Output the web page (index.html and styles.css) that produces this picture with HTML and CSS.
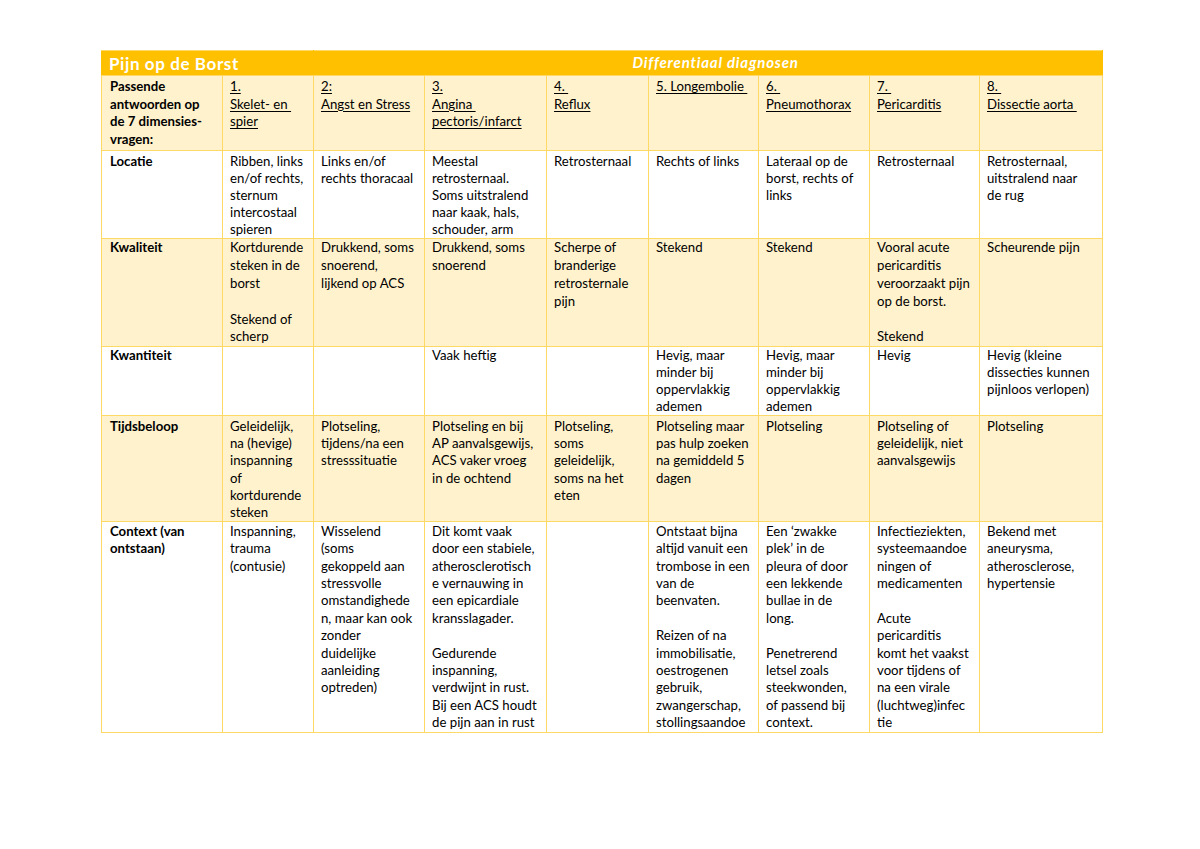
FILE: index.html
```html
<!DOCTYPE html>
<html lang="nl">
<head>
<meta charset="utf-8">
<title>Pijn op de Borst</title>
<link rel="stylesheet" href="styles.css">
</head>
<body>
<div class="page">
<table class="dd">
  <colgroup>
    <col class="c1"><col class="c2"><col class="c3"><col class="c4"><col class="c5"><col class="c6"><col class="c7"><col class="c8"><col class="c9">
  </colgroup>
  <tr class="r-title">
    <td colspan="2" class="t-main">Pijn op de Borst</td>
    <td colspan="7" class="t-sub">Differentiaal diagnosen</td>
  </tr>
  <tr class="r-head shade">
    <td class="lbl">Passende<br>antwoorden op<br>de 7 dimensies-<br>vragen:</td>
    <td><u>1.</u><br><u>Skelet- en&nbsp;</u><br><u>spier</u></td>
    <td><u>2:</u><br><u>Angst en Stress</u></td>
    <td><u>3.</u><br><u>Angina&nbsp;</u><br><u>pectoris/infarct</u></td>
    <td><u>4.&nbsp;</u><br><u>Reflux</u></td>
    <td><u>5. Longembolie&nbsp;</u></td>
    <td><u>6.&nbsp;</u><br><u>Pneumothorax</u></td>
    <td><u>7.&nbsp;</u><br><u>Pericarditis</u></td>
    <td><u>8.&nbsp;</u><br><u>Dissectie aorta&nbsp;</u></td>
  </tr>
  <tr class="r-loc">
    <td class="lbl">Locatie</td>
    <td>Ribben, links<br>en/of rechts,<br>sternum<br>intercostaal<br>spieren</td>
    <td>Links en/of<br>rechts thoracaal</td>
    <td>Meestal<br>retrosternaal.<br>Soms uitstralend<br>naar kaak, hals,<br>schouder, arm</td>
    <td>Retrosternaal</td>
    <td>Rechts of links</td>
    <td>Lateraal op de<br>borst, rechts of<br>links</td>
    <td>Retrosternaal</td>
    <td>Retrosternaal,<br>uitstralend naar<br>de rug</td>
  </tr>
  <tr class="r-kwal shade">
    <td class="lbl">Kwaliteit</td>
    <td>Kortdurende<br>steken in de<br>borst<br><br>Stekend of<br>scherp</td>
    <td>Drukkend, soms<br>snoerend,<br>lijkend op ACS</td>
    <td>Drukkend, soms<br>snoerend</td>
    <td>Scherpe of<br>branderige<br>retrosternale<br>pijn</td>
    <td>Stekend</td>
    <td>Stekend</td>
    <td>Vooral acute<br>pericarditis<br>veroorzaakt pijn<br>op de borst.<br><br>Stekend</td>
    <td>Scheurende pijn</td>
  </tr>
  <tr class="r-kwant">
    <td class="lbl">Kwantiteit</td>
    <td></td>
    <td></td>
    <td>Vaak heftig</td>
    <td></td>
    <td>Hevig, maar<br>minder bij<br>oppervlakkig<br>ademen</td>
    <td>Hevig, maar<br>minder bij<br>oppervlakkig<br>ademen</td>
    <td>Hevig</td>
    <td>Hevig (kleine<br>dissecties kunnen<br>pijnloos verlopen)</td>
  </tr>
  <tr class="r-tijd shade">
    <td class="lbl">Tijdsbeloop</td>
    <td>Geleidelijk,<br>na (hevige)<br>inspanning<br>of<br>kortdurende<br>steken</td>
    <td>Plotseling,<br>tijdens/na een<br>stresssituatie</td>
    <td>Plotseling en bij<br>AP aanvalsgewijs,<br>ACS vaker vroeg<br>in de ochtend</td>
    <td>Plotseling,<br>soms<br>geleidelijk,<br>soms na het<br>eten</td>
    <td>Plotseling maar<br>pas hulp zoeken<br>na gemiddeld 5<br>dagen</td>
    <td>Plotseling</td>
    <td>Plotseling of<br>geleidelijk, niet<br>aanvalsgewijs</td>
    <td>Plotseling</td>
  </tr>
  <tr class="r-ctx">
    <td class="lbl">Context (van<br>ontstaan)</td>
    <td>Inspanning,<br>trauma<br>(contusie)</td>
    <td>Wisselend<br>(soms<br>gekoppeld aan<br>stressvolle<br>omstandighede<br>n, maar kan ook<br>zonder<br>duidelijke<br>aanleiding<br>optreden)</td>
    <td>Dit komt vaak<br>door een stabiele,<br>atherosclerotisch<br>e vernauwing in<br>een epicardiale<br>kransslagader.<br><br>Gedurende<br>inspanning,<br>verdwijnt in rust.<br>Bij een ACS houdt<br>de pijn aan in rust</td>
    <td></td>
    <td>Ontstaat bijna<br>altijd vanuit een<br>trombose in een<br>van de<br>beenvaten.<br><br>Reizen of na<br>immobilisatie,<br>oestrogenen<br>gebruik,<br>zwangerschap,<br>stollingsaandoe</td>
    <td>Een ‘zwakke<br>plek’ in de<br>pleura of door<br>een lekkende<br>bullae in de<br>long.<br><br>Penetrerend<br>letsel zoals<br>steekwonden,<br>of passend bij<br>context.</td>
    <td>Infectieziekten,<br>systeemaandoe<br>ningen of<br>medicamenten<br><br>Acute<br>pericarditis<br>komt het vaakst<br>voor tijdens of<br>na een virale<br>(luchtweg)infec<br>tie</td>
    <td>Bekend met<br>aneurysma,<br>atherosclerose,<br>hypertensie</td>
  </tr>
</table>
</div>
</body>
</html>
```

FILE: styles.css
```css
html, body {
  margin: 0;
  padding: 0;
  background: #ffffff;
}

.page {
  padding: 50px 0 0 101px;
  font-family: Lato, "Open Sans", sans-serif;
  color: #000000;
}

.dd {
  border-collapse: collapse;
  table-layout: fixed;
  width: 1001px;
  font-size: 13.2px;
  line-height: 17.4px;
}

.c1 { width: 121px; }
.c2 { width: 91px; }
.c3 { width: 111px; }
.c4 { width: 122px; }
.c5 { width: 102px; }
.c6 { width: 110px; }
.c7 { width: 111px; }
.c8 { width: 110px; }
.c9 { width: 123px; }

.dd td {
  border: 1px solid #ffd966;
  vertical-align: top;
  padding: 1px 3px 0 7px;
  white-space: nowrap;
  overflow: hidden;
}

.dd td.lbl {
  font-weight: 700;
  padding-left: 8px;
}

.shade td { background: #fff2cc; }

/* title bar */
.dd .r-title td {
  background: #ffc000;
  color: #ffffff;
  font-weight: 700;
  height: 22px;
  padding-bottom: 0;
  border-left-color: #ffc000;
  border-right-color: #ffc000;
}

.dd td.t-main {
  font-size: 17px;
  letter-spacing: 0.6px;
  line-height: 22px;
  padding-top: 2px;
}

.dd td.t-sub {
  font-size: 15px;
  font-style: italic;
  letter-spacing: 0.8px;
  text-align: center;
  line-height: 20px;
  padding-top: 1px;
  padding-left: 18px;
}

/* body rows */
.dd .r-head td { height: 72px; padding-top: 2px; line-height: 17.6px; }
.dd .r-loc td { height: 85px; padding-top: 2px; line-height: 17.1px; }
.dd .r-kwal td { height: 106px; padding-top: 0; line-height: 17.8px; }
.dd .r-kwant td { height: 67px; padding-top: 0; line-height: 17px; }
.dd .r-tijd td { height: 101px; padding-top: 2px; line-height: 17.1px; }
.dd .r-ctx td { height: 208px; padding-top: 1px; line-height: 17.4px; }

u {
  text-decoration: underline;
  text-decoration-thickness: 1px;
  text-underline-offset: 2px;
}
```
